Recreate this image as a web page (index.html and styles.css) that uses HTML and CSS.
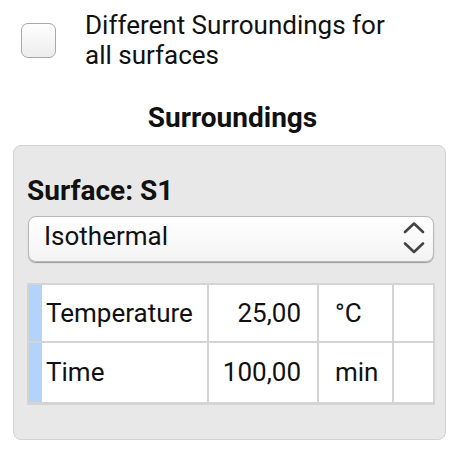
FILE: index.html
```html
<!DOCTYPE html>
<html>
<head>
<meta charset="utf-8"/>
<title>Surroundings</title>
<link rel="stylesheet" href="styles.css">
</head>
<body>

<div class="opt">
	<span class="cbox"></span>
	<span class="optText">Different Surroundings for all surfaces</span>
</div>

<h2 class="title">Surroundings</h2>

<div class="panel">
	<div class="surf">Surface: S1</div>
	<div class="sel">
		<span class="selText">Isothermal</span>
		<svg class="arrows" width="22" height="36" viewBox="0 0 22 36">
			<path d="M2 11 L11 2.5 L20 11" fill="none" stroke="#444" stroke-width="2.6" stroke-linecap="round" stroke-linejoin="round"/>
			<path d="M2 22.5 L11 31 L20 22.5" fill="none" stroke="#444" stroke-width="2.6" stroke-linecap="round" stroke-linejoin="round"/>
		</svg>
	</div>
	<table class="grid">
		<colgroup>
			<col class="cMark"><col class="cName"><col class="cVal"><col class="cUnit"><col>
		</colgroup>
		<tr>
			<td class="mark"></td>
			<td class="name">Temperature</td>
			<td class="val">25,00</td>
			<td class="unit">°C</td>
			<td></td>
		</tr>
		<tr class="last">
			<td class="mark"></td>
			<td class="name">Time</td>
			<td class="val">100,00</td>
			<td class="unit">min</td>
			<td></td>
		</tr>
	</table>
</div>

</body>
</html>
```

FILE: styles.css
```css
html, body { margin: 0; background: #fff; color: #111; font-family: Roboto, "Liberation Sans", sans-serif; font-size: 26px; }
* { box-sizing: border-box; }
.opt { display: flex; align-items: center; padding: 10px 0 0 21px; }
.cbox { width: 35px; height: 35px; border: 1px solid #a8a8a8; border-radius: 7px;
	background: linear-gradient(#fff, #ececec); flex: none; }
.optText { margin-left: 29px; width: 330px; line-height: 30px; }
.title { margin: 33px 0 0 0; text-align: center; font-size: 28px; font-weight: bold; padding-left: 15px; line-height: 30px; }
.panel { margin: 12px 4px 0 13px; background: #e8e8e8; border: 1px solid #d2d2d2; border-radius: 8px;
	padding: 30px 10px 34px 13px; }
.surf { font-size: 28px; font-weight: bold; line-height: 30px; }
.sel { margin: 10px 1px 0 1px; height: 46px; border: 1px solid #b8b8b8; border-radius: 8px;
	background: linear-gradient(#fff, #f3f3f3); box-shadow: 0 1px 1px #9a9a9a;
	display: flex; align-items: center; justify-content: space-between; padding: 0 8px 0 15px; }
.selText { line-height: 30px; padding-bottom: 6px; }
.arrows { display: block; }
.grid { margin-top: 21px; width: 100%; border-collapse: collapse; table-layout: fixed; background: #fff;
	border: 2px solid #d4d4d4; border-bottom-width: 3px; font-size: 26px; }
.cMark { width: 14px; }
.cName { width: 166px; }
.cVal { width: 110px; }
.cUnit { width: 75px; }
.grid td { border: 2px solid #d4d4d4; height: 58px; padding: 0; line-height: 30px; }
.grid tr.last td { height: 61px; }
.grid td.mark { background: #b4d3fb; border-right: none; }
.grid tr + tr td.mark { border-top-color: #a9c2e2; }
.grid td.name { padding-left: 4px; border-left: none; }
.grid td.val { text-align: right; padding-right: 16px; }
.grid td.unit { padding-left: 16px; }
```
